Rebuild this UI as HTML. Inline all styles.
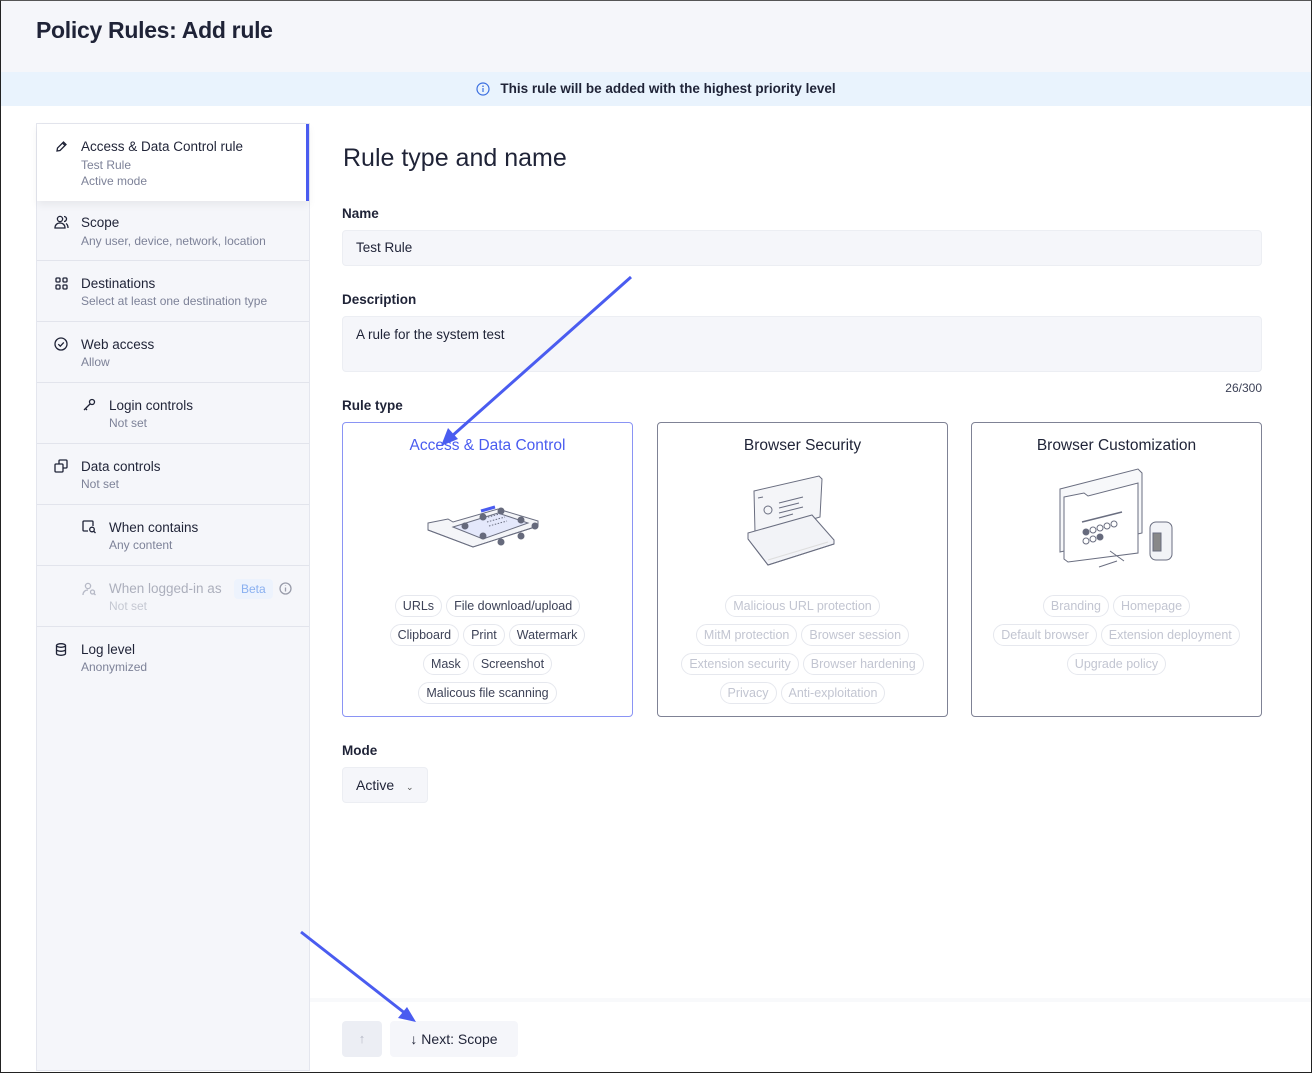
<!DOCTYPE html>
<html><head><style>
*{box-sizing:border-box;margin:0;padding:0}
body{width:1312px;height:1073px;overflow:hidden;font-family:"Liberation Sans",sans-serif;background:#fff;position:relative;color:#1f2337}
.frame{position:absolute;inset:0;border:1px solid #222;border-top-color:#555;pointer-events:none;z-index:10}
.hdr{position:absolute;left:0;top:0;width:1312px;height:72px;background:#f5f6fa}
.hdr h1{position:absolute;left:36px;top:17px;font-size:23px;font-weight:bold;color:#1f2337;letter-spacing:-0.3px}
.ban{position:absolute;left:0;top:72px;width:1312px;height:34px;background:#e9f3fd;font-size:13.5px;font-weight:bold;text-align:center;line-height:34px;color:#1f2337}
.ban svg{vertical-align:-3px;margin-right:10px}
.side{position:absolute;left:36px;top:123px;width:274px;height:948px;background:#f5f6fa;border:1px solid #e4e6ee}
.it{position:absolute;left:0;width:272px;border-bottom:1px solid #e2e4ec}
.it svg{position:absolute}
.t{position:absolute;font-size:13.5px;color:#1f2337}
.s{position:absolute;font-size:12px;color:#7d8298}
.main{position:absolute;left:310px;top:106px;width:1002px;height:967px}
.lbl{position:absolute;font-size:13.5px;font-weight:bold;color:#1f2337}
.inp{position:absolute;left:32px;width:920px;background:#f5f6fa;border:1px solid #eceef3;border-radius:4px;font-size:13.5px;padding:0 13px;color:#1f2337}
.card{position:absolute;top:316px;width:291px;height:295px;border:1px solid #7f8295;border-radius:4px;background:#fff}
.card h3{position:absolute;top:14px;width:100%;text-align:center;font-weight:normal;font-size:15.5px;color:#1f2337}
.chips{position:absolute;top:172px;left:0;width:100%;text-align:center;line-height:0}
.row{margin-bottom:7px;height:22px}
.chip{display:inline-block;height:22px;line-height:20px;border:1px solid #e6e8ee;border-radius:11px;padding:0 7px;font-size:12.5px;color:#3d4257;margin:0 2px}
.dis .chip{color:#c2c5d1}
.arrow{position:absolute;z-index:5}
</style></head><body>
<div class="hdr"><h1>Policy Rules: Add rule</h1></div>
<div class="ban"><svg width="14" height="14" viewBox="0 0 14 14"><circle cx="7" cy="7" r="6" fill="none" stroke="#3b6fe0" stroke-width="1.2"/><rect x="6.4" y="6" width="1.2" height="4" fill="#3b6fe0"/><circle cx="7" cy="4.2" r=".8" fill="#3b6fe0"/></svg>This rule will be added with the highest priority level</div>

<div class="side">
 <div class="it" style="top:0;height:77px;background:#fff;box-shadow:0 4px 8px rgba(0,0,0,.06);border-right:3px solid #4a5cf0;border-bottom:none">
  <svg style="left:18px;top:16px" width="13" height="13" viewBox="0 0 13 13"><path d="M2 11l.5-3 6-6 2.5 2.5-6 6zM7.5 3l2.5 2.5" fill="none" stroke="#1f2337" stroke-width="1.3"/></svg>
  <div class="t" style="left:44px;top:15px">Access &amp; Data Control rule</div>
  <div class="s" style="left:44px;top:34px">Test Rule</div>
  <div class="s" style="left:44px;top:50px">Active mode</div>
 </div>
 <div class="it" style="top:77px;height:60px">
  <svg style="left:17px;top:14px" width="15" height="14" viewBox="0 0 15 14"><circle cx="6" cy="4" r="2.6" fill="none" stroke="#1f2337" stroke-width="1.3"/><path d="M1 13c0-3 2-5 5-5s5 2 5 5zM10 1.5a2.5 2.5 0 010 5M12 8.5c1.3.8 2 2.3 2 4.5" fill="none" stroke="#1f2337" stroke-width="1.3"/></svg>
  <div class="t" style="left:44px;top:14px">Scope</div><div class="s" style="left:44px;top:33px">Any user, device, network, location</div></div>
 <div class="it" style="top:137px;height:61px">
  <svg style="left:18px;top:16px" width="13" height="13" viewBox="0 0 13 13" fill="none" stroke="#1f2337" stroke-width="1.3"><rect x="1" y="1" width="4" height="4" rx="1"/><rect x="8" y="1" width="4" height="4" rx="1"/><rect x="1" y="8" width="4" height="4" rx="1"/><rect x="8" y="8" width="4" height="4" rx="1"/></svg>
  <div class="t" style="left:44px;top:15px">Destinations</div><div class="s" style="left:44px;top:33px">Select at least one destination type</div></div>
 <div class="it" style="top:198px;height:61px">
  <svg style="left:17px;top:15px" width="14" height="14" viewBox="0 0 14 14" fill="none" stroke="#1f2337" stroke-width="1.3"><circle cx="7" cy="7" r="6"/><path d="M4.3 7.2l2 2 3.5-3.8"/></svg>
  <div class="t" style="left:44px;top:15px">Web access</div><div class="s" style="left:44px;top:33px">Allow</div></div>
 <div class="it" style="top:259px;height:61px">
  <svg style="left:45px;top:15px" width="14" height="14" viewBox="0 0 14 14" fill="none" stroke="#1f2337" stroke-width="1.3"><circle cx="10" cy="4" r="2.5"/><path d="M8 6L2 12M3.5 10.5l1.5 1.5"/></svg>
  <div class="t" style="left:72px;top:15px">Login controls</div><div class="s" style="left:72px;top:33px">Not set</div></div>
 <div class="it" style="top:320px;height:61px">
  <svg style="left:17px;top:15px" width="14" height="14" viewBox="0 0 14 14" fill="none" stroke="#1f2337" stroke-width="1.3"><rect x="1" y="5" width="8" height="8" rx="1"/><path d="M5 5V2a1 1 0 011-1h6a1 1 0 011 1v6a1 1 0 01-1 1H9"/></svg>
  <div class="t" style="left:44px;top:15px">Data controls</div><div class="s" style="left:44px;top:33px">Not set</div></div>
 <div class="it" style="top:381px;height:61px">
  <svg style="left:45px;top:15px" width="15" height="14" viewBox="0 0 15 14" fill="none" stroke="#1f2337" stroke-width="1.3"><path d="M6 11H2a1 1 0 01-1-1V2a1 1 0 011-1h8a1 1 0 011 1v4"/><circle cx="10" cy="9.5" r="2.3"/><path d="M11.7 11.2L13.5 13"/></svg>
  <div class="t" style="left:72px;top:15px">When contains</div><div class="s" style="left:72px;top:33px">Any content</div></div>
 <div class="it" style="top:442px;height:61px">
  <svg style="left:45px;top:16px" width="15" height="14" viewBox="0 0 15 14" fill="none" stroke="#b6b9c6" stroke-width="1.3"><circle cx="6" cy="4" r="2.6"/><path d="M1 13c0-3 2-5 5-5"/><circle cx="10.5" cy="10" r="2"/><path d="M12 11.5l1.5 1.5"/></svg>
  <div class="t" style="left:72px;top:15px;color:#acafbc">When logged-in as</div>
  <div style="position:absolute;left:197px;top:13px;height:20px;padding:0 7px;background:#edf3fd;border-radius:4px;font-size:12px;line-height:20px;color:#8ab0f0">Beta</div>
  <svg style="left:242px;top:16px" width="13" height="13" viewBox="0 0 13 13" fill="none" stroke="#9a9dab" stroke-width="1.3"><circle cx="6.5" cy="6.5" r="5.5"/><path d="M6.5 5.5v4M6.5 3.5v.5"/></svg>
  <div class="s" style="left:72px;top:33px;color:#c5c8d2">Not set</div></div>
 <div class="it" style="top:503px;height:61px;border-bottom:none">
  <svg style="left:18px;top:16px" width="12" height="13" viewBox="0 0 12 13" fill="none" stroke="#1f2337" stroke-width="1.3"><ellipse cx="6" cy="2.5" rx="4.5" ry="1.8"/><path d="M1.5 2.5v8c0 1 2 1.8 4.5 1.8s4.5-.8 4.5-1.8v-8M1.5 6.5c0 1 2 1.8 4.5 1.8s4.5-.8 4.5-1.8"/></svg>
  <div class="t" style="left:44px;top:15px">Log level</div><div class="s" style="left:44px;top:33px">Anonymized</div></div>
</div>

<div class="main">
 <div style="position:absolute;left:33px;top:38px;font-size:25px;color:#1f2337">Rule type and name</div>
 <div class="lbl" style="left:32px;top:100px">Name</div>
 <div class="inp" style="top:124px;height:36px;line-height:34px">Test Rule</div>
 <div class="lbl" style="left:32px;top:186px">Description</div>
 <div class="inp" style="top:210px;height:56px;padding-top:10px">A rule for the system test</div>
 <div style="position:absolute;right:50px;top:275px;font-size:12px;color:#3d4257">26/300</div>
 <div class="lbl" style="left:32px;top:292px">Rule type</div>

 <div class="card" style="left:32px;border-color:#8a94f4">
  <h3 style="color:#4a5cf0">Access &amp; Data Control</h3>
  <svg style="position:absolute;left:80px;top:62px" width="130" height="80" viewBox="0 0 130 80" fill="none" stroke="#6a6e80" stroke-width="1">
   <path d="M5 38l20-4 5 3 45-13 40 12v5L50 62 5 45z" fill="#f4f5f8"/><path d="M5 45l45 17 65-21" />
   <path d="M30 42l45-14 30 10-45 16z" fill="#e4e8fb"/>
   <path d="M58 26l14-4" stroke="#4a5cf0" stroke-width="3"/>
   <path d="M62 33l18-5M64 37l18-5M66 41l18-5" stroke-dasharray="1.5 1.5"/>
   <g fill="#666a7c" stroke="none"><circle cx="60" cy="32" r="3.5"/><circle cx="78" cy="26" r="3.5"/><circle cx="98" cy="35" r="3.5"/><circle cx="42" cy="41" r="3.5"/><circle cx="60" cy="51" r="3.5"/><circle cx="78" cy="57" r="3.5"/><circle cx="98" cy="51" r="3.5"/><circle cx="112" cy="41" r="3.5"/></g>
  </svg>
  <div class="chips">
   <div class="row"><span class="chip">URLs</span><span class="chip">File download/upload</span></div>
   <div class="row"><span class="chip">Clipboard</span><span class="chip">Print</span><span class="chip">Watermark</span></div>
   <div class="row"><span class="chip">Mask</span><span class="chip">Screenshot</span></div>
   <div class="row"><span class="chip">Malicous file scanning</span></div>
  </div>
 </div>

 <div class="card dis" style="left:347px">
  <h3>Browser Security</h3>
  <svg style="position:absolute;left:88px;top:50px" width="112" height="95" viewBox="0 0 112 95" fill="none" stroke="#6a6e80" stroke-width="1">
   <path d="M8 18l65-15 3 3-2 38-60 18-5-3z" fill="#f4f5f8"/>
   <circle cx="22" cy="37" r="4"/><path d="M33 30l24-6M33 35l20-5M33 40l24-6M33 45l14-4M12 25l5-1"/>
   <path d="M2 60l64-18 22 25v4L22 92 2 66z" fill="#f2f3f7"/><path d="M2 66l20 26 66-21" />
   <path d="M22 87l60-18" stroke="#ddd"/>
  </svg>
  <div class="chips">
   <div class="row"><span class="chip">Malicious URL protection</span></div>
   <div class="row"><span class="chip">MitM protection</span><span class="chip">Browser session</span></div>
   <div class="row"><span class="chip">Extension security</span><span class="chip">Browser hardening</span></div>
   <div class="row"><span class="chip">Privacy</span><span class="chip">Anti-exploitation</span></div>
  </div>
 </div>

 <div class="card dis" style="left:661px">
  <h3>Browser Customization</h3>
  <svg style="position:absolute;left:82px;top:44px" width="120" height="105" viewBox="0 0 120 105" fill="none" stroke="#6a6e80" stroke-width="1">
   <path d="M6 22l78-20 4 4v60L6 85z" fill="#f7f8fa"/>
   <path d="M10 30l20-4 4 3 50-13v70L14 95 10 92z" fill="#fff"/>
   <path d="M28 55l40-10" stroke-width="1.5"/>
   <g><circle cx="32" cy="65" r="3" fill="#666a7c"/><circle cx="39" cy="63" r="3"/><circle cx="46" cy="61" r="3"/><circle cx="53" cy="59" r="3"/><circle cx="60" cy="57" r="3"/><circle cx="32" cy="74" r="3"/><circle cx="39" cy="72" r="3"/><circle cx="46" cy="70" r="3" fill="#666a7c"/></g>
   <rect x="96" y="55" width="22" height="38" rx="6" fill="#f2f3f7"/><rect x="99" y="66" width="8" height="18" fill="#888"/>
   <path d="M45 100l18-6M56 84l14 10"/>
  </svg>
  <div class="chips">
   <div class="row"><span class="chip">Branding</span><span class="chip">Homepage</span></div>
   <div class="row"><span class="chip">Default browser</span><span class="chip">Extension deployment</span></div>
   <div class="row"><span class="chip">Upgrade policy</span></div>
  </div>
 </div>

 <div class="lbl" style="left:32px;top:637px">Mode</div>
 <div style="position:absolute;left:32px;top:661px;width:86px;height:36px;background:#f5f6fa;border:1px solid #eceef3;border-radius:4px;font-size:14px;line-height:34px;padding-left:13px">Active <span style="font-size:9px;margin-left:8px;color:#555">&#8964;</span></div>

 <div style="position:absolute;left:0;top:892px;width:1002px;height:75px;background:#fff;border-top:4px solid #f8f9fb">
  <div style="position:absolute;left:32px;top:19px;width:40px;height:36px;background:#eceef4;border-radius:4px;text-align:center;line-height:36px;color:#b6b9c6;font-size:13px">&#8593;</div>
  <div style="position:absolute;left:80px;top:19px;width:128px;height:36px;background:#f5f6fa;border-radius:4px;text-align:center;line-height:36px;font-size:14px;color:#1f2337"><b>&#8595;</b> Next: Scope</div>
 </div>
</div>

<svg class="arrow" style="left:0;top:0" width="1312" height="1073">
 <g stroke="#4a5cf0" stroke-width="3" fill="#4a5cf0">
  <line x1="631" y1="277" x2="452" y2="436"/><path d="M441 446l7-18 10 11z" stroke="none"/>
  <line x1="301" y1="932" x2="406" y2="1014"/><path d="M416 1022l-18-4 9-11z" stroke="none"/>
 </g>
</svg>
<div class="frame"></div>
</body></html>
